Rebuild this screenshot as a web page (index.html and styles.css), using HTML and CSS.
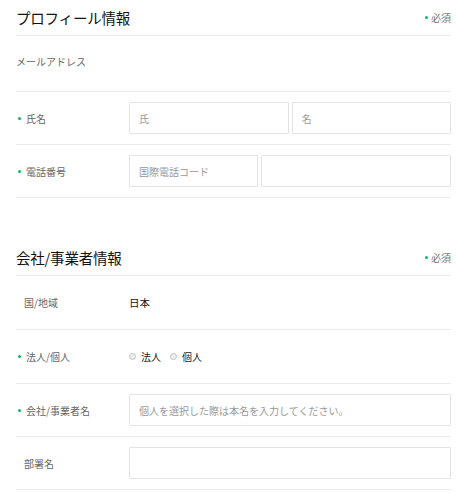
FILE: index.html
```html
<!DOCTYPE html>
<html lang="ja">
<head>
<meta charset="utf-8">
<title>プロフィール情報</title>
<link rel="stylesheet" href="styles.css">
</head>
<body>
<div class="page">
  <section class="sec">
    <header class="sec-head">
      <h2 class="sec-title">プロフィール情報</h2>
      <span class="req-note">必須</span>
    </header>
    <div class="row row-text row-mail">
      <div class="label flush">メールアドレス</div>
    </div>
    <div class="row">
      <div class="label req">氏名</div>
      <div class="fields two-even">
        <input class="inp" type="text" placeholder="氏">
        <input class="inp" type="text" placeholder="名">
      </div>
    </div>
    <div class="row">
      <div class="label req">電話番号</div>
      <div class="fields two-phone">
        <input class="inp" type="text" placeholder="国際電話コード">
        <input class="inp" type="text">
      </div>
    </div>
  </section>

  <section class="sec sec-second">
    <header class="sec-head">
      <h2 class="sec-title">会社/事業者情報</h2>
      <span class="req-note">必須</span>
    </header>
    <div class="row row-text">
      <div class="label">国/地域</div>
      <div class="value">日本</div>
    </div>
    <div class="row row-text">
      <div class="label req">法人/個人</div>
      <div class="radios">
        <label class="radio"><input type="radio" name="kind" class="radio-in"><span>法人</span></label>
        <label class="radio"><input type="radio" name="kind" class="radio-in"><span>個人</span></label>
      </div>
    </div>
    <div class="row">
      <div class="label req">会社/事業者名</div>
      <div class="fields one">
        <input class="inp" type="text" placeholder="個人を選択した際は本名を入力してください。">
      </div>
    </div>
    <div class="row">
      <div class="label">部署名</div>
      <div class="fields one">
        <input class="inp" type="text">
      </div>
    </div>
  </section>
</div>
</body>
</html>
```

FILE: styles.css
```css
* { box-sizing: border-box; }
html, body { margin: 0; padding: 0; background: #fff; }
body {
  font-family: "Noto Sans CJK JP", "Noto Sans", "Liberation Sans", sans-serif;
  color: #333;
}
.page {
  width: 451px;
  padding-left: 16px;
}
.sec-second { margin-top: 42px; }
.sec-head {
  height: 36px;
  display: flex;
  align-items: center;
  justify-content: space-between;
  border-bottom: 1px solid #ececec;
  padding-bottom: 1px;
}
.sec-title {
  margin: 0;
  font-size: 14.5px;
  font-weight: 400;
  color: #111;
  letter-spacing: -0.2px;
}
.req-note {
  font-size: 10px;
  color: #777;
  display: flex;
  align-items: center;
  gap: 3px;
}
.req-note::before,
.label.req::before {
  content: "";
  width: 3px;
  height: 3px;
  border-radius: 50%;
  background: #09b86a;
  display: inline-block;
}
.row {
  display: flex;
  align-items: center;
  min-height: 53px;
  padding: 10px 0;
  border-bottom: 1px solid #ececec;
}
.row-text { min-height: 54px; }
.row-mail { min-height: 56px; padding: 8px 0 12px; }
.label {
  width: 113px;
  flex: none;
  font-size: 10px;
  color: #666;
  padding-left: 8px;
  display: flex;
  align-items: center;
}
.label.flush { padding-left: 0; }
.label.req { padding-left: 0; }
.label.req::before { margin: 0 5px 0 2px; }
.fields {
  flex: 1;
  display: grid;
  gap: 3px;
}
.two-even { grid-template-columns: 1fr 1fr; }
.two-phone { grid-template-columns: 129px 1fr; }
.one { grid-template-columns: 1fr; }
.inp {
  height: 32px;
  border: 1px solid #e3e3e3;
  border-radius: 1px;
  padding: 0 9px;
  font-family: inherit;
  font-size: 10px;
  color: #333;
  background: #fff;
  outline: none;
  min-width: 0;
}
.inp::placeholder { color: #999; }
.value {
  font-size: 10.5px;
  font-weight: 400;
  color: #111;
}
.radios {
  display: flex;
  align-items: center;
  gap: 9px;
}
.radio {
  display: flex;
  align-items: center;
  gap: 5px;
  font-size: 10px;
  font-weight: 400;
  color: #222;
}
.radio-in {
  appearance: none;
  -webkit-appearance: none;
  margin: 0;
  width: 7px;
  height: 7px;
  border-radius: 50%;
  border: 1px solid #c4c4c4;
  background: #ececec;
}
```
